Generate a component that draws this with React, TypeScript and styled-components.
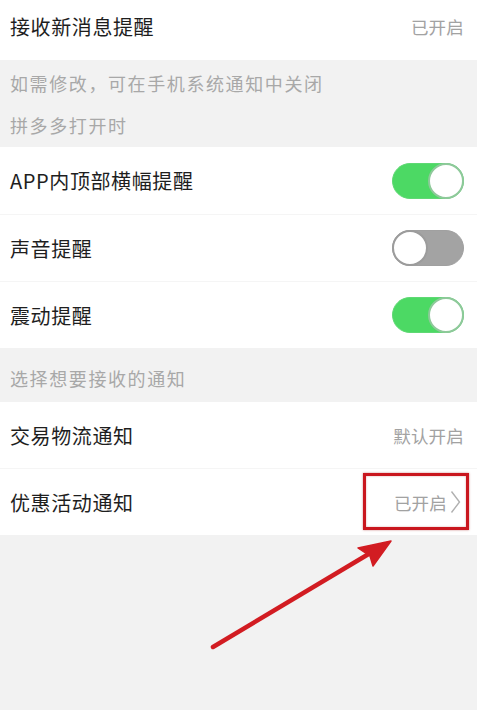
import styled, { createGlobalStyle } from "styled-components";

const GlobalStyle = createGlobalStyle`
    html, body {
        margin: 0;
        padding: 0;
        background: #f2f2f2;
    }
    body {
        font-family: "Noto Sans CJK SC", "Noto Sans", sans-serif;
        -webkit-font-smoothing: antialiased;
    }
`

interface ToggleRowData {
    id: string,
    label: string,
    on: boolean,
}

const toggles: ToggleRowData[] = [
    {id: "banner", label: "APP内顶部横幅提醒", on: true},
    {id: "sound", label: "声音提醒", on: false},
    {id: "vibrate", label: "震动提醒", on: true},
]

const Toggle = (props: {on: boolean}) => (
    <Track $on={props.on}>
        <Knob $on={props.on}/>
    </Track>
)

const Chevron = () => (
    <svg width="11" height="24" viewBox="0 0 11 24">
        <path d="M1.5 1.5 L9.5 12 L1.5 22.5" fill="none" stroke="#b0b0b0" strokeWidth="1.4"/>
    </svg>
)

const App = () => {
    return (
        <Page>
            <GlobalStyle/>
            <TopRow>
                <Label>接收新消息提醒</Label>
                <Value>已开启</Value>
            </TopRow>

            <Hint $top={2} $bottom={1}>
                <HintLine>如需修改，可在手机系统通知中关闭</HintLine>
                <HintLine>拼多多打开时</HintLine>
            </Hint>

            {toggles.map((item) => (
                <Row key={item.id} $height={67}>
                    <Label>{item.label}</Label>
                    <Toggle on={item.on}/>
                </Row>
            ))}

            <Hint $top={6} $bottom={0}>
                <HintLine $height={48}>选择想要接收的通知</HintLine>
            </Hint>

            <Row $height={66}>
                <Label>交易物流通知</Label>
                <Value>默认开启</Value>
            </Row>
            <Row $height={67}>
                <Label>优惠活动通知</Label>
                <ValueLink>
                    <Value>已开启</Value>
                    <Chevron/>
                </ValueLink>
                <Highlight/>
            </Row>

            <Arrow width="477" height="710" viewBox="0 0 477 710">
                <defs>
                    <filter id="soft" x="-10%" y="-10%" width="120%" height="120%">
                        <feGaussianBlur stdDeviation="0.6"/>
                    </filter>
                </defs>
                <g filter="url(#soft)" fill="#d21c22" stroke="#d21c22">
                    <line x1="213" y1="647" x2="372" y2="552" strokeWidth="4.5" strokeLinecap="round"/>
                    <path d="M391 541 L373 566 L370 556 L358 548 Z" strokeWidth="1.5" strokeLinejoin="round"/>
                </g>
            </Arrow>
        </Page>
    )
}

const Page = styled.div`
    position: relative;
    min-height: 710px;
    background: #f2f2f2;
    display: flex;
    flex-direction: column;
`

const Row = styled.div<{ $height: number }>`
    position: relative;
    display: flex;
    align-items: center;
    justify-content: space-between;
    height: ${(props) => props.$height}px;
    padding: 0 13px 0 10px;
    background: #ffffff;
    box-sizing: border-box;

    & + & {
        border-top: 1px solid #f5f5f5;
    }
`

const TopRow = styled(Row).attrs({ $height: 60 })`
    padding-bottom: 8px;
`

const Label = styled.span`
    font-size: 20px;
    letter-spacing: 0.6px;
    color: #1e1e1e;
`

const Value = styled.span`
    font-size: 17.5px;
    color: #a2a2a2;
    letter-spacing: 0.2px;
`

const ValueLink = styled.div`
    display: flex;
    align-items: center;
    gap: 3px;
    margin-right: 3px;
`

const Hint = styled.div<{ $top: number, $bottom: number }>`
    display: flex;
    flex-direction: column;
    padding: ${(props) => props.$top}px 10px ${(props) => props.$bottom}px;
    background: #f2f2f2;
`

const HintLine = styled.div<{ $height?: number }>`
    height: ${(props) => props.$height ?? 42}px;
    line-height: ${(props) => props.$height ?? 42}px;
    font-size: 18px;
    letter-spacing: 1.6px;
    color: #a8a8a8;
`

const Track = styled.div<{ $on: boolean }>`
    position: relative;
    width: 72px;
    height: 36px;
    border-radius: 18px;
    background: ${(props) => props.$on ? "#4cd964" : "#a3a3a3"};
    box-sizing: border-box;
    border: 1px solid ${(props) => props.$on ? "#5fd874" : "#a0a0a0"};
    flex-shrink: 0;
`

const Knob = styled.div<{ $on: boolean }>`
    position: absolute;
    top: -1px;
    ${(props) => props.$on ? "right: -1px;" : "left: -1px;"}
    width: 36px;
    height: 36px;
    border-radius: 50%;
    background: #ffffff;
    box-sizing: border-box;
    border: 2px solid ${(props) => props.$on ? "#8ec99a" : "#9c9c9c"};
`

const Highlight = styled.div`
    position: absolute;
    top: 4px;
    right: 8px;
    width: 106px;
    height: 57px;
    box-sizing: border-box;
    border: 3px solid #c9161e;
    box-shadow: 0 0 2px rgba(160, 20, 20, 0.5), inset 0 0 2px rgba(160, 20, 20, 0.4);
    pointer-events: none;
`

const Arrow = styled.svg`
    position: absolute;
    top: 0;
    left: 0;
    pointer-events: none;
`

export default App
